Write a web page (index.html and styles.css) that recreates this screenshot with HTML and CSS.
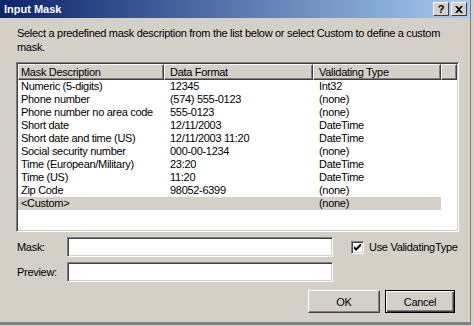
FILE: index.html
```html
<!DOCTYPE html>
<html lang="en">
<head>
  <meta charset="UTF-8" />
  <title>Input Mask</title>
  <link rel="stylesheet" href="styles.css">
</head>
<body>

  <div class="dialog">
    <!-- title bar -->
    <div class="titlebar">
      <span class="title">Input Mask</span>
      <div class="caption-buttons">
        <span class="cap-btn">?</span>
        <span class="cap-btn">
          <svg width="8" height="7" viewBox="0 0 8 7"><path d="M0 0h2l2 2 2-2h2L5 3.5 8 7H6L4 5 2 7H0l3-3.5z" fill="#000"/></svg>
        </span>
      </div>
    </div>

    <div class="content">
      <p class="intro">Select a predefined mask description from the list below or select Custom to define a custom mask.</p>

      <div class="listbox">
        <table class="masks">
          <colgroup>
            <col class="col-desc">
            <col class="col-format">
            <col class="col-type">
            <col>
          </colgroup>
          <thead>
            <tr>
              <th class="first">Mask Description</th>
              <th>Data Format</th>
              <th>Validating Type</th>
              <th class="filler"></th>
            </tr>
          </thead>
          <tbody>
            <tr><td class="first">Numeric (5-digits)</td><td>12345</td><td>Int32</td><td></td></tr>
            <tr><td class="first">Phone number</td><td>(574) 555-0123</td><td>(none)</td><td></td></tr>
            <tr><td class="first">Phone number no area code</td><td>555-0123</td><td>(none)</td><td></td></tr>
            <tr><td class="first">Short date</td><td>12/11/2003</td><td>DateTime</td><td></td></tr>
            <tr><td class="first">Short date and time (US)</td><td>12/11/2003 11:20</td><td>DateTime</td><td></td></tr>
            <tr><td class="first">Social security number</td><td>000-00-1234</td><td>(none)</td><td></td></tr>
            <tr><td class="first">Time (European/Military)</td><td>23:20</td><td>DateTime</td><td></td></tr>
            <tr><td class="first">Time (US)</td><td>11:20</td><td>DateTime</td><td></td></tr>
            <tr><td class="first">Zip Code</td><td>98052-6399</td><td>(none)</td><td></td></tr>
            <tr class="selected"><td class="first">&lt;Custom&gt;</td><td></td><td>(none)</td><td class="blank"></td></tr>
          </tbody>
        </table>
      </div>

      <div class="fields">
        <label class="field-label">Mask:</label>
        <div class="textbox"></div>
        <div class="check-row">
          <span class="checkbox">
            <svg width="7" height="7" viewBox="0 0 7 7"><path d="M0 2v3l2 2 5-5V-1L2 4z" fill="#000"/></svg>
          </span>
          <span>Use ValidatingType</span>
        </div>
        <label class="field-label">Preview:</label>
        <div class="textbox"></div>
      </div>

      <div class="actions">
        <button class="btn ok">OK</button>
        <button class="btn cancel">Cancel</button>
      </div>
    </div>
  </div>

</body>
</html>
```

FILE: styles.css
```css
html {
  background-color: #d4d0c8;
}

body {
  margin: 0;
  padding: 0;
  font-family: 'Liberation Sans', Arial, sans-serif;
  font-size: 11px;
  letter-spacing: -0.3px;
  color: #000;
}

.dialog {
  width: 470px;
  height: 322px;
  background-color: #d4d0c8;
  border-right: 1px solid #808080;
  border-bottom: 3px solid #808080;
  box-shadow: 0 1px 0 #404040;
}

/* title bar */
.titlebar {
  height: 18px;
  display: flex;
  align-items: center;
  justify-content: space-between;
  padding: 0 3px 0 4px;
  background: linear-gradient(to right, #0a246a, #a6caf0);
}

.title {
  color: #fff;
  font-weight: bold;
  letter-spacing: 0;
}

.caption-buttons {
  display: flex;
  gap: 2px;
}

.cap-btn {
  width: 14px;
  height: 12px;
  display: flex;
  align-items: center;
  justify-content: center;
  background-color: #d4d0c8;
  border-top: 1px solid #fff;
  border-left: 1px solid #fff;
  border-right: 1px solid #404040;
  border-bottom: 1px solid #404040;
  font-weight: bold;
  font-size: 11px;
  line-height: 12px;
}

/* dialog body */
.content {
  padding: 0 11px 0 16px;
}

.intro {
  margin: 8px 0 8px 1px;
  line-height: 14px;
  width: 430px;
}

.listbox {
  height: 166px;
  background-color: #fff;
  border-top: 1px solid #808080;
  border-left: 1px solid #808080;
  border-right: 1px solid #fff;
  border-bottom: 1px solid #fff;
  box-shadow: inset 1px 1px 0 #404040, inset -1px -1px 0 #d4d0c8;
  padding: 1px;
}

.masks {
  width: 439px;
  table-layout: fixed;
  border-collapse: separate;
  border-spacing: 0;
}

.col-desc {
  width: 146px;
}

.col-format {
  width: 149px;
}

.col-type {
  width: 128px;
}

.masks th {
  height: 14px;
  padding: 0 0 0 5px;
  text-align: left;
  font-weight: normal;
  line-height: 14px;
  background-color: #d4d0c8;
  border-top: 1px solid #fff;
  border-left: 1px solid #fff;
  border-bottom: 1px solid #404040;
  border-right: 1px solid #404040;
  box-shadow: inset -1px -1px 0 #808080;
  white-space: nowrap;
  overflow: hidden;
}

.masks th.first {
  padding-left: 2px;
}

.masks td {
  height: 13px;
  padding: 0 0 0 6px;
  line-height: 13px;
  white-space: nowrap;
  overflow: hidden;
}

.masks td.first {
  padding-left: 3px;
}

.selected td {
  background-color: #d4d0c8;
}

.selected td.blank {
  background-color: #fff;
}

/* mask / preview fields */
.fields {
  display: grid;
  grid-template-columns: 50px 266px auto;
  grid-template-rows: 20px 20px;
  row-gap: 5px;
  align-items: center;
  margin-top: 5px;
  padding-left: 1px;
}

.textbox {
  height: 16px;
  background-color: #fff;
  border-top: 1px solid #808080;
  border-left: 1px solid #808080;
  border-right: 1px solid #fff;
  border-bottom: 1px solid #fff;
  box-shadow: inset 1px 1px 0 #404040, inset -1px -1px 0 #d4d0c8;
  padding: 1px;
}

.check-row {
  display: flex;
  align-items: center;
  gap: 5px;
  margin-left: 18px;
}

.checkbox {
  width: 9px;
  height: 9px;
  display: flex;
  align-items: center;
  justify-content: center;
  background-color: #fff;
  border-top: 1px solid #808080;
  border-left: 1px solid #808080;
  border-right: 1px solid #fff;
  border-bottom: 1px solid #fff;
  box-shadow: inset 1px 1px 0 #404040, inset -1px -1px 0 #d4d0c8;
  padding: 1px;
}

/* buttons */
.actions {
  display: flex;
  justify-content: flex-end;
  gap: 5px;
  margin-top: 8px;
  padding-right: 4px;
}

.btn {
  height: 23px;
  padding: 0;
  font-family: inherit;
  font-size: 11px;
  letter-spacing: -0.3px;
  color: #000;
  background-color: #d4d0c8;
  border-top: 1px solid #fff;
  border-left: 1px solid #fff;
  border-right: 1px solid #404040;
  border-bottom: 1px solid #404040;
  box-shadow: inset -1px -1px 0 #808080;
}

.ok {
  width: 72px;
}

.cancel {
  width: 70px;
  border: 1px solid #000;
  box-shadow: inset 1px 1px 0 #fff, inset -1px -1px 0 #404040, inset -2px -2px 0 #808080;
}
```
